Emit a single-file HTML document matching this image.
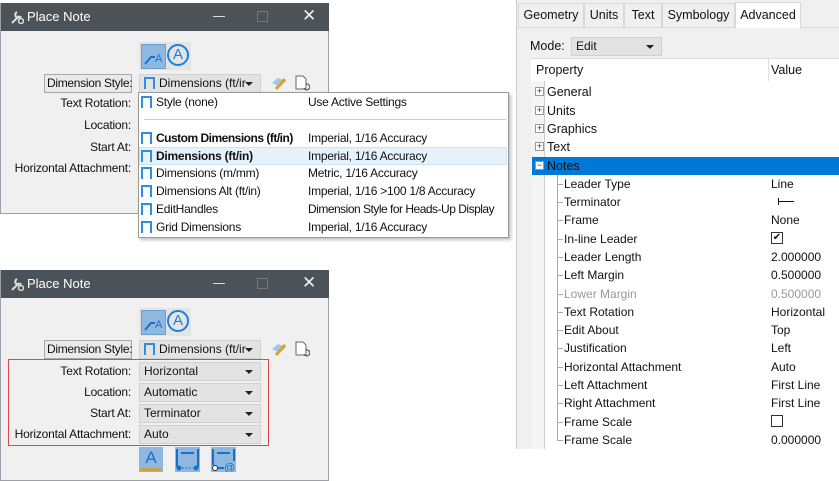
<!DOCTYPE html>
<html><head><meta charset="utf-8"><style>
*{margin:0;padding:0;box-sizing:border-box}
body{width:839px;height:481px;background:#fff;position:relative;overflow:hidden;font-family:"Liberation Sans",sans-serif;font-size:12px;color:#111}
.a{position:absolute;white-space:nowrap}
.win{position:absolute;left:0;width:329px;background:#f0f0f0;border:1px solid #9aa0a6;border-top:none}
.tb{position:absolute;left:0;top:0;width:328px;height:28px;background:#4b5359;color:#fff;font-size:13px}
.lbl{position:absolute;text-align:right;width:131px;left:0;white-space:nowrap;font-size:12px;letter-spacing:-0.2px}
.combo{position:absolute;left:139px;width:122px;height:19px;background:#e3e3e3;border:1px solid #d0d0d0;padding-left:4px;line-height:17px;font-size:12px;white-space:nowrap;overflow:hidden}
.combo:after{content:"";position:absolute;right:7px;top:7px;border-left:4px solid transparent;border-right:4px solid transparent;border-top:4px solid #222}
.dicon{display:inline-block;width:11px;height:12px;border:2px solid #2e8fe0;border-bottom:none;vertical-align:-2px;margin-right:4px;border-top-width:2px}
.row{position:absolute;left:138px;width:370px;height:18px;line-height:18px;font-size:12px;white-space:nowrap;letter-spacing:-0.25px}
.row span.c2{position:absolute;left:170px}
.p{position:absolute;left:564px;font-size:12px;white-space:nowrap}
.v{position:absolute;left:771px;font-size:12px;white-space:nowrap}
.tline{position:absolute;left:557px;width:6px;border-top:1px solid #aaa}
.wr{position:absolute;left:9px;top:7px;width:14px;height:14px}
</style></head><body>

<div class="win" style="top:3px;height:211px">
 <div class="tb"><svg class="wr"><path d="M2 13 L9 6 M7 2 a3 3 0 1 0 4 4" stroke="#ddd" stroke-width="2" fill="none"/><circle cx="11" cy="11" r="2.5" fill="none" stroke="#ddd" stroke-width="1.5"/></svg><span class="a" style="left:26px;top:6px">Place Note</span>
 <span class="a" style="left:212px;top:13px;width:12px;border-top:1px solid #ddd"></span>
 <span class="a" style="left:256px;top:8px;width:11px;height:11px;border:1px solid #777"></span>
 <span class="a" style="left:301px;top:3px;font-size:17px;color:#eee">✕</span></div>
</div>
<div class="win" style="top:270px;height:211px">
 <div class="tb"><svg class="wr"><path d="M2 13 L9 6 M7 2 a3 3 0 1 0 4 4" stroke="#ddd" stroke-width="2" fill="none"/><circle cx="11" cy="11" r="2.5" fill="none" stroke="#ddd" stroke-width="1.5"/></svg><span class="a" style="left:26px;top:6px">Place Note</span>
 <span class="a" style="left:212px;top:13px;width:12px;border-top:1px solid #ddd"></span>
 <span class="a" style="left:256px;top:8px;width:11px;height:11px;border:1px solid #777"></span>
 <span class="a" style="left:301px;top:3px;font-size:17px;color:#eee">✕</span></div>
</div>

<div class="a" style="left:139px;top:42px;width:52px;height:28px;background:#e4e4e4"></div>
<div class="a" style="left:141px;top:44px;width:25px;height:25px;background:#8fb8e0;border:1px solid #6aa0d0"><svg width="25" height="25"><path d="M3 19 L9 12 L13 12" stroke="#1a70c8" stroke-width="2" fill="none"/><text x="13" y="17" font-size="11" fill="#1a70c8" font-family="Liberation Sans">A</text></svg></div>
<div class="a" style="left:167px;top:44px;width:22px;height:22px;border:2px solid #1a80e0;border-radius:50%;color:#1a80e0;font-size:15px;text-align:center;line-height:18px">A</div>

<div class="a" style="left:139px;top:308px;width:52px;height:28px;background:#e4e4e4"></div>
<div class="a" style="left:141px;top:310px;width:25px;height:25px;background:#8fb8e0;border:1px solid #6aa0d0"><svg width="25" height="25"><path d="M3 19 L9 12 L13 12" stroke="#1a70c8" stroke-width="2" fill="none"/><text x="13" y="17" font-size="11" fill="#1a70c8" font-family="Liberation Sans">A</text></svg></div>
<div class="a" style="left:167px;top:310px;width:22px;height:22px;border:2px solid #1a80e0;border-radius:50%;color:#1a80e0;font-size:15px;text-align:center;line-height:18px">A</div>

<div class="a" style="left:44px;top:74px;width:88px;height:19px;border:1px solid #a8a8a8;background:#eaeaea;font-size:12px;letter-spacing:-0.3px;line-height:17px;padding-left:2px">Dimension Style:</div>
<div class="combo" style="top:74px"><span class="dicon"></span>Dimensions (ft/ir</div>
<svg class="a" style="left:270px;top:75px" width="18" height="16"><path d="M2 8 L8 3 L16 6 L10 12 Z" fill="#9cc8ea"/><path d="M6 14 L15 4" stroke="#e0a020" stroke-width="3"/></svg>
<svg class="a" style="left:294px;top:75px" width="16" height="16"><path d="M2 1 H9 L12 4 V14 H2 Z" fill="#fff" stroke="#666"/><path d="M12 9 a3 3 0 1 1 -2 4" stroke="#444" fill="none"/></svg>
<div class="lbl" style="top:96px">Text Rotation:</div>
<div class="lbl" style="top:118px">Location:</div>
<div class="lbl" style="top:140px">Start At:</div>
<div class="lbl" style="top:161px">Horizontal Attachment:</div>

<div class="a" style="left:138px;top:92px;width:371px;height:146px;background:#fff;border:1px solid #999;box-shadow:2px 2px 3px rgba(0,0,0,.25)"></div>
<div class="a" style="left:144px;top:119px;width:362px;border-top:1px solid #ccc"></div>
<div class="a" style="left:139px;top:147px;width:368px;height:18px;background:#e5f1fb;border:1px solid #cde4f7"></div>
<div class="row" style="top:93px"><span class="dicon" style="margin-left:3px"></span>Style (none)<span class="c2">Use Active Settings</span></div>
<div class="row" style="top:129px;letter-spacing:-0.5px"><span class="dicon" style="margin-left:3px"></span><b>Custom Dimensions (ft/in)</b><span class="c2" style="letter-spacing:-0.25px">Imperial, 1/16 Accuracy</span></div>
<div class="row" style="top:147px"><span class="dicon" style="margin-left:3px"></span><b>Dimensions (ft/in)</b><span class="c2">Imperial, 1/16 Accuracy</span></div>
<div class="row" style="top:164px"><span class="dicon" style="margin-left:3px"></span>Dimensions (m/mm)<span class="c2">Metric, 1/16 Accuracy</span></div>
<div class="row" style="top:182px"><span class="dicon" style="margin-left:3px"></span>Dimensions Alt (ft/in)<span class="c2">Imperial, 1/16 &gt;100 1/8 Accuracy</span></div>
<div class="row" style="top:200px"><span class="dicon" style="margin-left:3px"></span>EditHandles<span class="c2" style="letter-spacing:-0.5px">Dimension Style for Heads-Up Display</span></div>
<div class="row" style="top:218px"><span class="dicon" style="margin-left:3px"></span>Grid Dimensions<span class="c2">Imperial, 1/16 Accuracy</span></div>

<div class="a" style="left:44px;top:340px;width:88px;height:19px;border:1px solid #a8a8a8;background:#eaeaea;font-size:12px;letter-spacing:-0.3px;line-height:17px;padding-left:2px">Dimension Style:</div>
<div class="combo" style="top:340px"><span class="dicon"></span>Dimensions (ft/ir</div>
<svg class="a" style="left:270px;top:341px" width="18" height="16"><path d="M2 8 L8 3 L16 6 L10 12 Z" fill="#9cc8ea"/><path d="M6 14 L15 4" stroke="#e0a020" stroke-width="3"/></svg>
<svg class="a" style="left:294px;top:341px" width="16" height="16"><path d="M2 1 H9 L12 4 V14 H2 Z" fill="#fff" stroke="#666"/><path d="M12 9 a3 3 0 1 1 -2 4" stroke="#444" fill="none"/></svg>
<div class="a" style="left:8px;top:359px;width:261px;height:87px;border:1.5px solid #e04848"></div>
<div class="lbl" style="top:364px">Text Rotation:</div>
<div class="lbl" style="top:385px">Location:</div>
<div class="lbl" style="top:406px">Start At:</div>
<div class="lbl" style="top:427px">Horizontal Attachment:</div>
<div class="combo" style="top:362px">Horizontal</div>
<div class="combo" style="top:383px">Automatic</div>
<div class="combo" style="top:404px">Terminator</div>
<div class="combo" style="top:425px">Auto</div>
<div class="a" style="left:139px;top:447px;width:24px;height:25px;background:#8fb8e0;color:#1a70c8;font-size:17px;text-align:center;line-height:21px">A<div style="position:absolute;left:1px;bottom:1px;width:22px;height:3px;background:#c9a050"></div></div>
<svg class="a" style="left:175px;top:447px" width="25" height="25"><rect width="25" height="25" fill="#8fb8e0"/><path d="M2 2 V20 M23 2 V20 M6 6 H19" stroke="#1a70c8" stroke-width="2"/><circle cx="4" cy="21" r="2.5" fill="#1a70c8"/><circle cx="21" cy="21" r="2.5" fill="#1a70c8"/><path d="M7 21 H18" stroke="#1a70c8" stroke-dasharray="2 1.5"/></svg>
<svg class="a" style="left:211px;top:447px" width="25" height="25"><rect width="25" height="25" fill="#8fb8e0"/><path d="M2 2 V18 M23 2 V14 M6 6 H19 M6 21 H13" stroke="#1a70c8" stroke-width="2"/><circle cx="4" cy="21" r="2.5" fill="#fff" stroke="#333"/><text x="13" y="24" font-size="11" fill="#1a70c8" font-family="Liberation Sans">@</text></svg>

<div class="a" style="left:516px;top:0;width:323px;height:449px;background:#f0f0f0;border-left:1px solid #ccc"></div>
<div class="a" style="left:517px;top:27px;width:322px;border-top:1px solid #d8d8d8"></div>
<div class="a" style="left:518px;top:3px;width:66px;height:24px;border:1px solid #d8d8d8;border-bottom:none;line-height:22px;text-align:center;font-size:12.5px">Geometry</div>
<div class="a" style="left:584px;top:3px;width:40px;height:24px;border:1px solid #d8d8d8;border-bottom:none;line-height:22px;text-align:center;font-size:12.5px">Units</div>
<div class="a" style="left:624px;top:3px;width:38px;height:24px;border:1px solid #d8d8d8;border-bottom:none;line-height:22px;text-align:center;font-size:12.5px">Text</div>
<div class="a" style="left:662px;top:3px;width:73px;height:24px;border:1px solid #d8d8d8;border-bottom:none;line-height:22px;text-align:center;font-size:12.5px">Symbology</div>
<div class="a" style="left:735px;top:2px;width:66px;height:26px;background:#fff;border:1px solid #d8d8d8;border-bottom:none;line-height:24px;text-align:center;font-size:12.5px">Advanced</div>
<div class="a" style="left:530px;top:39px;font-size:12.5px">Mode:</div>
<div class="combo" style="left:571px;top:37px;width:91px">Edit</div>
<div class="a" style="left:531px;top:58px;width:308px;height:391px;background:#fff;border-left:1px solid #bbb;border-top:1px solid #ddd"></div>
<div class="a" style="left:531px;top:59px;width:14px;height:390px;background:#f4f4f4;border-right:1px solid #ccc"></div>
<div class="a" style="left:531px;top:59px;width:308px;height:22px;background:#fff"></div>
<div class="a" style="left:768px;top:59px;height:22px;border-left:1px solid #ddd"></div>
<div class="a" style="left:536px;top:63px;font-size:12.5px">Property</div>
<div class="a" style="left:771px;top:63px;font-size:12.5px">Value</div>
<div class="a" style="left:557px;top:175px;height:266px;border-left:1px solid #aaa"></div>

<div class="a" style="left:535px;top:87px;width:9px;height:9px;border:1px solid #999;background:#fff;font-size:9px;line-height:7px;text-align:center;color:#235">+</div><div class="a" style="left:547px;top:85px;font-size:12.5px">General</div>
<div class="a" style="left:535px;top:106px;width:9px;height:9px;border:1px solid #999;background:#fff;font-size:9px;line-height:7px;text-align:center;color:#235">+</div><div class="a" style="left:547px;top:104px;font-size:12.5px">Units</div>
<div class="a" style="left:535px;top:124px;width:9px;height:9px;border:1px solid #999;background:#fff;font-size:9px;line-height:7px;text-align:center;color:#235">+</div><div class="a" style="left:547px;top:122px;font-size:12.5px">Graphics</div>
<div class="a" style="left:535px;top:142px;width:9px;height:9px;border:1px solid #999;background:#fff;font-size:9px;line-height:7px;text-align:center;color:#235">+</div><div class="a" style="left:547px;top:140px;font-size:12.5px">Text</div>
<div class="a" style="left:532px;top:157px;width:307px;height:18px;background:#0078d7"></div>
<div class="a" style="left:535px;top:161px;width:9px;height:9px;border:1px solid #999;background:#fff;font-size:9px;line-height:7px;text-align:center;color:#235">−</div><div class="a" style="left:547px;top:159px;font-size:12.5px">Notes</div>

<div class="tline" style="top:184px"></div><div class="p" style="top:177px">Leader Type</div><div class="v" style="top:177px">Line</div>
<div class="tline" style="top:202px"></div><div class="p" style="top:195px">Terminator</div><div class="a" style="left:778px;top:201px;width:16px;border-top:1px solid #111"></div><div class="a" style="left:778px;top:198px;height:7px;border-left:1px solid #111"></div>
<div class="tline" style="top:220px"></div><div class="p" style="top:213px">Frame</div><div class="v" style="top:213px">None</div>
<div class="tline" style="top:239px"></div><div class="p" style="top:232px">In-line Leader</div><div class="a" style="left:771px;top:232px;width:12px;height:12px;border:1px solid #333;font-size:10px;line-height:10px;text-align:center">✔</div>
<div class="tline" style="top:257px"></div><div class="p" style="top:250px">Leader Length</div><div class="v" style="top:250px">2.000000</div>
<div class="tline" style="top:275px"></div><div class="p" style="top:268px">Left Margin</div><div class="v" style="top:268px">0.500000</div>
<div class="tline" style="top:294px"></div><div class="p" style="top:287px;color:#999">Lower Margin</div><div class="v" style="top:287px;color:#999">0.500000</div>
<div class="tline" style="top:312px"></div><div class="p" style="top:305px">Text Rotation</div><div class="v" style="top:305px">Horizontal</div>
<div class="tline" style="top:330px"></div><div class="p" style="top:323px">Edit About</div><div class="v" style="top:323px">Top</div>
<div class="tline" style="top:348px"></div><div class="p" style="top:341px">Justification</div><div class="v" style="top:341px">Left</div>
<div class="tline" style="top:367px"></div><div class="p" style="top:360px">Horizontal Attachment</div><div class="v" style="top:360px">Auto</div>
<div class="tline" style="top:385px"></div><div class="p" style="top:378px">Left Attachment</div><div class="v" style="top:378px">First Line</div>
<div class="tline" style="top:403px"></div><div class="p" style="top:396px">Right Attachment</div><div class="v" style="top:396px">First Line</div>
<div class="tline" style="top:422px"></div><div class="p" style="top:415px">Frame Scale</div><div class="a" style="left:771px;top:415px;width:12px;height:12px;border:1px solid #333"></div>
<div class="tline" style="top:440px"></div><div class="p" style="top:433px">Frame Scale</div><div class="v" style="top:433px">0.000000</div>
</body></html>
